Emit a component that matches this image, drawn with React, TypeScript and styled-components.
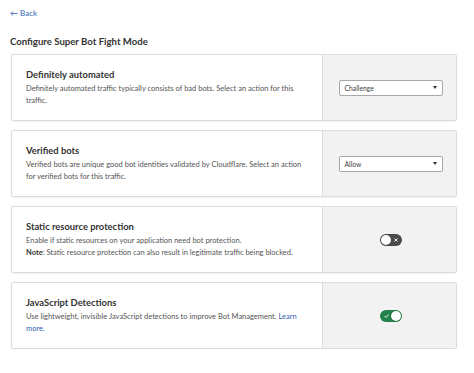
import React from "react";
import styled, { createGlobalStyle } from "styled-components";

const GlobalStyle = createGlobalStyle`
  body {
    margin: 0;
    background: #ffffff;
    font-family: Lato, "Open Sans", sans-serif;
    color: #333333;
  }
`;

type Setting = {
  title: string;
  body: React.ReactNode;
  control: React.ReactNode;
};

const Select = ({ value }: { value: string }) => (
  <StyledSelect>
    <span>{value}</span>
    <Caret />
  </StyledSelect>
);

const Toggle = ({ on }: { on: boolean }) => (
  <StyledToggle $on={on}>
    {on ? (
      <svg width="5" height="4" viewBox="0 0 10 8">
        <path d="M1 4 L4 7 L9 1" fill="none" stroke="#fff" strokeWidth="1.8" />
      </svg>
    ) : null}
    <Knob />
    {!on ? (
      <svg width="4" height="4" viewBox="0 0 8 8">
        <path d="M1 1 L7 7 M7 1 L1 7" fill="none" stroke="#fff" strokeWidth="1.8" />
      </svg>
    ) : null}
  </StyledToggle>
);

const App = () => {
  const settings: Setting[] = [
    {
      title: "Definitely automated",
      body: "Definitely automated traffic typically consists of bad bots. Select an action for this traffic.",
      control: <Select value="Challenge" />,
    },
    {
      title: "Verified bots",
      body: "Verified bots are unique good bot identities validated by Cloudflare. Select an action for verified bots for this traffic.",
      control: <Select value="Allow" />,
    },
    {
      title: "Static resource protection",
      body: (
        <>
          Enable if static resources on your application need bot protection.
          <br />
          <b>Note</b>: Static resource protection can also result in legitimate traffic being blocked.
        </>
      ),
      control: <Toggle on={false} />,
    },
    {
      title: "JavaScript Detections",
      body: (
        <>
          Use lightweight, invisible JavaScript detections to improve Bot Management.{" "}
          <Link href="#">Learn more.</Link>
        </>
      ),
      control: <Toggle on={true} />,
    },
  ];

  return (
    <Page>
      <GlobalStyle />
      <Back href="#">← Back</Back>
      <Heading>Configure Super Bot Fight Mode</Heading>
      <List>
        {settings.map((s) => (
          <Card key={s.title}>
            <Info>
              <CardTitle>{s.title}</CardTitle>
              <Description>{s.body}</Description>
            </Info>
            <Control>{s.control}</Control>
          </Card>
        ))}
      </List>
    </Page>
  );
};

const Page = styled.div`
  padding: 0 17px 0 11px;
`;

const Back = styled.a`
  display: block;
  padding-top: 7px;
  font-size: 8px;
  line-height: 12px;
  color: #2f62b0;
  text-decoration: none;
  margin-left: -1px;
`;

const Heading = styled.h1`
  margin: 16px 0 0 -1px;
  font-size: 9.6px;
  line-height: 14px;
  font-weight: 700;
  color: #333;
`;

const List = styled.div`
  margin-top: 5px;
  display: flex;
  flex-direction: column;
  gap: 9px;
`;

const Card = styled.div`
  display: flex;
  height: 67px;
  box-sizing: border-box;
  border: 1px solid #dcdcdc;
  border-radius: 2px;
  box-shadow: 0 1px 2px rgba(0, 0, 0, 0.06);
  overflow: hidden;
`;

const Info = styled.div`
  width: 311px;
  box-sizing: border-box;
  padding: 0 20px 0 14px;
  display: flex;
  flex-direction: column;
  justify-content: center;
  border-right: 1px solid #dcdcdc;
`;

const CardTitle = styled.div`
  font-size: 9.4px;
  font-weight: 700;
  color: #333;
  line-height: 13px;
`;

const Description = styled.div`
  margin-top: 2px;
  font-size: 7.5px;
  line-height: 12px;
  color: #555;

  b {
    font-weight: 700;
    color: #333;
  }
`;

const Link = styled.a`
  color: #2f62b0;
  text-decoration: none;
`;

const Control = styled.div`
  flex: 1;
  background: #f2f2f2;
  display: flex;
  align-items: center;
  justify-content: center;
`;

const StyledSelect = styled.div`
  width: 104px;
  height: 16px;
  box-sizing: border-box;
  border: 1px solid #a8a8a8;
  border-radius: 2px;
  background: #fff;
  display: flex;
  align-items: center;
  justify-content: space-between;
  padding: 0 5px 0 5px;
  font-size: 6.8px;
  color: #444;
  margin-left: 2px;
`;

const Caret = styled.span`
  width: 0;
  height: 0;
  border-left: 2.5px solid transparent;
  border-right: 2.5px solid transparent;
  border-top: 3px solid #333;
`;

const StyledToggle = styled.div<{ $on: boolean }>`
  width: 22px;
  height: 12px;
  box-sizing: border-box;
  border-radius: 6px;
  background: ${(p) => (p.$on ? "#23824a" : "#4a4a4a")};
  display: flex;
  align-items: center;
  justify-content: space-between;
  padding: ${(p) => (p.$on ? "0 1px 0 4px" : "0 4px 0 1px")};
  margin-left: 2px;
`;

const Knob = styled.span`
  width: 10px;
  height: 10px;
  border-radius: 50%;
  background: #fff;
  box-shadow: 0 0 0 0.5px rgba(0, 0, 0, 0.2);
`;

export default App;
